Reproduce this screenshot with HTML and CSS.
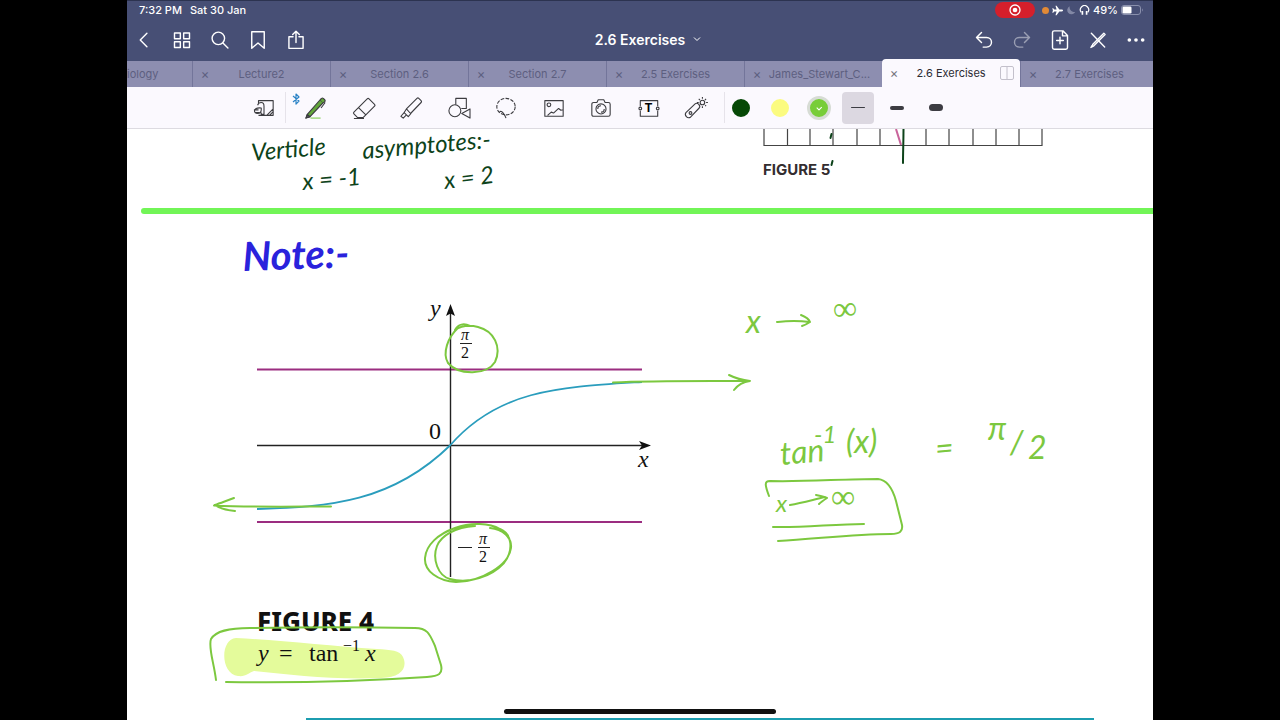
FILE: index.html
```html
<!DOCTYPE html>
<html lang="en">
<head>
  <meta charset="UTF-8" />
  <meta name="viewport" content="width=device-width, initial-scale=1.0" />
  <title>2.6 Exercises</title>
  <link rel="stylesheet" href="styles.css">
</head>
<body>
  <div class="tablet">
    <header class="topbar">
      <div class="status">
        <span>7:32 PM</span>
        <span>Sat 30 Jan</span>
        <div class="status-right">
          <span class="recording">
            <svg width="12" height="12" viewBox="0 0 12 12"><circle cx="6" cy="6" r="5" fill="none" stroke="#fff" stroke-width="1.3"/><circle cx="6" cy="6" r="2.3" fill="#fff"/></svg>
          </span>
          <span class="mic-dot"></span>
          <svg width="11" height="11" viewBox="0 0 12 12"><path d="M12 6c0-.7-.7-1-1.500-1H8L5 .8H3.800L5 5H2.500L1.300 3.500H.3L1 6 .3 8.500h1L2.500 7H5l-1.200 4.200H5L8 7h2.500C11.300 7 12 6.700 12 6z" fill="#fff"/></svg>
          <svg width="10" height="10" viewBox="0 0 12 12"><path d="M4.500 1.500A5 5 0 1 0 11 8.300 5.500 5.500 0 0 1 4.500 1.500z" fill="#8288a5"/></svg>
          <svg width="11" height="11" viewBox="0 0 12 12"><path d="M2.500 8A4.500 4.500 0 1 1 9.500 8" fill="none" stroke="#fff" stroke-width="1.300"/><path d="M3.700 6.500v4M8.300 6.500v4" stroke="#fff" stroke-width="1.800"/></svg>
          <span>49%</span>
          <svg width="23" height="10" viewBox="0 0 23 10"><rect x=".5" y=".5" width="19" height="9" rx="2.500" fill="none" stroke="#8a90ad"/><rect x="1.500" y="1.500" width="9" height="7" rx="1.300" fill="#fff"/><path d="M21.300 3.500c1 .5 1 2.500 0 3" fill="#8a90ad"/></svg>
        </div>
      </div>

      <div class="titlebar">
        <div class="nav">
          <button aria-label="Back"><svg viewBox="0 0 24 24"><path d="M15.500 4 7.500 12l8 8"/></svg></button>
          <button aria-label="Pages"><svg viewBox="0 0 24 24"><path d="M3 3.500h7V10.500H3zM14 3.500h7V10.500h-7zM3 14h7v7H3zM14 14h7v7h-7z"/></svg></button>
          <button aria-label="Search"><svg viewBox="0 0 24 24"><circle cx="10" cy="10" r="7.500"/><path d="m15.500 15.500 6 6"/></svg></button>
          <button aria-label="Bookmark"><svg viewBox="0 0 24 24"><path d="M4.500 2h15v20L12 15.500l-7.500 6.500z"/></svg></button>
          <button aria-label="Share"><svg viewBox="0 0 24 24"><path d="M8.500 8h-5v14h17V8h-5M12 15V1.500M8 5.500l4-4 4 4"/></svg></button>
        </div>
        <button class="doc-title">2.6 Exercises
          <svg class="chevron" viewBox="0 0 8 8"><path d="M1 2.500 4 5.500l3-3"/></svg>
        </button>
        <div class="nav nav-right">
          <button aria-label="Undo"><svg viewBox="0 0 24 24"><path d="M9 3 3 9l6 6M3 9h12c8 0 8 11.500 0 11.500h-4"/></svg></button>
          <button aria-label="Redo" disabled><svg viewBox="0 0 24 24"><path d="m15 3 6 6-6 6M21 9H9C1 9 1 20.500 9 20.500h4"/></svg></button>
          <button aria-label="Add page"><svg viewBox="0 0 24 24"><path d="M3 3q0-2 2-2h10.500L21 6.500V21q0 2-2 2H5q-2 0-2-2zM15 1v6h6M12 8.500v8M8 12.500h8"/></svg></button>
          <button aria-label="Stop editing"><svg viewBox="0 0 24 24"><path d="m4 4 16 16.500"/><path d="M19 4 5.500 17.500M20.500 5.500 7 19M19 4l1.500 1.500M5.500 17.500 3.500 21 7 19"/></svg></button>
          <button aria-label="More"><svg viewBox="0 0 24 24"><g fill="#fff" stroke="none"><circle cx="4" cy="12" r="2.200"/><circle cx="12" cy="12" r="2.200"/><circle cx="20" cy="12" r="2.200"/></g></svg></button>
        </div>
      </div>
    </header>

    <nav class="tabs">
      <div class="tab tab-cut"><a href="#">iology</a></div>
      <div class="tab"><button aria-label="Close">×</button><a href="#">Lecture2</a></div>
      <div class="tab"><button aria-label="Close">×</button><a href="#">Section 2.6</a></div>
      <div class="tab"><button aria-label="Close">×</button><a href="#">Section 2.7</a></div>
      <div class="tab"><button aria-label="Close">×</button><a href="#">2.5 Exercises</a></div>
      <div class="tab tab-long"><button aria-label="Close">×</button><a href="#">James_Stewart_C...</a></div>
      <div class="tab active"><button aria-label="Close">×</button><a href="#">2.6 Exercises</a>
        <svg class="split" viewBox="0 0 14 14"><path d="M.5 2q0-1.500 1.500-1.500h10q1.500 0 1.500 1.500v10q0 1.500-1.500 1.500H2Q.5 13.500.5 12zM7 .5v13"/></svg>
      </div>
      <div class="tab"><button aria-label="Close">×</button><a href="#">2.7 Exercises</a></div>
    </nav>

    <div class="toolbar">
      <button aria-label="Zoom window"><svg viewBox="0 0 24 24"><path d="M6 7V4h16v16H6M22 13l-7 7M18 20l4-4"/><path d="M5 9q1-3 4-3t3 4v9H9v-2M9 12c-9-1-9 6-4 6q4 0 4-4zM1 14h5M2 17h5" /></svg></button>
      <span class="divider"></span>
      <div class="tools">
        <button class="pen" aria-label="Pen">
          <svg viewBox="0 0 24 24"><path d="M6 23h11" stroke="#7fce4d"/><path d="M1 23 2.500 19 16.500 3l3.500 3L5.500 21.500z" fill="#62a63a"/><path d="m16.500 3 1.500-1.500q1-.7 2 0L21.500 3q1 1 0 2L20 6.500M22 6l-4.500 6" fill="#62a63a"/><path d="m1 23 1.500-4 3 2.500z" fill="#555"/></svg>
          <svg class="bluetooth" viewBox="0 0 8 12"><path d="m1 3 6 5-3 3V1l3 3-6 5"/></svg>
        </button>
        <button aria-label="Eraser"><svg viewBox="0 0 24 24"><path d="M1 16.500 15.500 2q1-1 2 0L23.500 8q1 1 0 2L11 22.500H5L1 18.500q-1-1 0-2zM6 11.500l8 8M1 23.500h11"/></svg></button>
        <button aria-label="Highlighter"><svg viewBox="0 0 24 24"><path d="M7 13 18.500 1.500q1-1 2 0L23 4q1 1 0 2L11.500 18zM7 13l-2.500 4 4.500 4.500 3-3.500M4.500 17l-3.500 4 2.500 2 3.500-3.500"/></svg></button>
        <button aria-label="Shapes"><svg viewBox="0 0 24 24"><path d="M8.500 8.500V1.500H20v11h-5.500M24 13v10l-9-5z"/><circle cx="7.500" cy="15" r="6.500"/></svg></button>
        <button aria-label="Lasso"><svg viewBox="0 0 24 24"><ellipse cx="12" cy="10.500" rx="10" ry="9" stroke-dasharray="4 1.500"/><path d="M5 16q2-1 4 1.500t3 5.500"/></svg></button>
        <button aria-label="Image"><svg viewBox="0 0 24 24"><path d="M2 4h20v17H2zM5 20l4-3.500 2.500 1 5.500-5 2.500 2L22 14"/><circle cx="6.500" cy="8.500" r="2"/></svg></button>
        <button aria-label="Camera"><svg viewBox="0 0 24 24"><path d="M4 6h3.500L9 3h6l1.500 3H20q2 0 2 2v11q0 2-2 2H4q-2 0-2-2V8q0-2 2-2z"/><circle cx="12" cy="13" r="5.500"/><path d="M8.500 13q0-3.500 3.500-3.500M15.500 13q0 3.500-3.500 3.500"/></svg></button>
        <button class="text-tool" aria-label="Text"><svg viewBox="0 0 24 24"><path d="M2.500 10V4h19v6M2.500 15v6h19v-6"/><circle cx="2.500" cy="12.500" r="1.500"/><circle cx="21.500" cy="12.500" r="1.500"/></svg><span>T</span></button>
        <button aria-label="Laser pointer"><svg viewBox="0 0 24 24"><path d="m1 17 10-9.500q2-1.500 4 .5t.5 4L6 22q-2.500 1.500-4.500-.5T1 17z"/><circle cx="6" cy="17.500" r="1.500"/><circle cx="19" cy="6" r="2.500"/><path d="M19 0v2M19 10v2M13 6h2M23 6h2M15 2l1.300 1.300M23 2l-1.300 1.300M22 9l1 1"/></svg></button>
      </div>
      <span class="divider"></span>
      <div class="swatches">
        <button class="swatch dark-green" aria-label="Dark green"></button>
        <button class="swatch yellow" aria-label="Yellow"></button>
        <button class="swatch green picked" aria-label="Green"><svg viewBox="0 0 24 24"><path d="m9.500 11.500 2.500 2.500 3-3"/></svg></button>
      </div>
      <div class="widths">
        <button class="picked" aria-label="Thin"><span class="line thin"></span></button>
        <button aria-label="Medium"><span class="line medium"></span></button>
        <button aria-label="Thick"><span class="line thick"></span></button>
      </div>
    </div>

    <main>
      <svg class="page" viewBox="127 129 1026 591">
        <!-- bottom of figure 5 -->
        <path class="grid" d="M764 129v16.500h278V129M787.500 129v16M810 129v16M833 129v16M857 129v16M880 129v16M926 129v16M949 129v16M973 129v16M996 129v16M1019 129v16"/>
        <path d="m896 129 5 16" stroke="#c9649b" stroke-width="2"/>
        <path class="dark-ink" d="M903.500 129c0 12-.5 23-.5 34M831.500 134l-1 4M832.500 161l-1 4"/>
        <text class="caption-small" x="763" y="174.500">FIGURE 5</text>

        <!-- notes above the divider -->
        <g class="dark-note">
          <text x="252" y="161" transform="rotate(-5 252 161)">Verticle</text>
          <text x="363" y="159" transform="rotate(-5 363 159)">asymptotes:-</text>
          <text x="303" y="190" transform="rotate(-5 303 190)">x = -1</text>
          <text x="445" y="189" transform="rotate(-7 445 189)">x = 2</text>
        </g>
        <path d="M144 211h1009" stroke="#72f557" stroke-width="6" stroke-linecap="round"/>
        <text class="blue-note" x="243" y="271" transform="rotate(-2 243 271)">Note:-</text>

        <!-- arctan graph -->
        <path d="M257 369.500h385M257 522h385" stroke="#9b2d80" stroke-width="1.800"/>
        <path d="M257 445.500h385M450.500 312v265" stroke="#222" stroke-width="1.400"/>
        <path d="m651 445.500-12-4.500 3 4.500-3 4.500zM450.500 304l-4.500 12 4.500-2.500 4.500 2.500z" fill="#111"/>
        <path class="curve" d="M257 509C330 507 392 502 450 445.500 499 389 561 387 642 382"/>
        <g class="math">
          <text class="italic" x="430" y="316">y</text>
          <text class="italic" x="638" y="467">x</text>
          <text x="429" y="439">0</text>
          <text class="italic small" x="461" y="340">π</text>
          <text class="small" x="461" y="358">2</text>
          <text class="italic small" x="479" y="544">π</text>
          <text class="small" x="479" y="562">2</text>
        </g>
        <path d="M460 343.500h12M478 547.500h12M458 547.500h14" stroke="#222" stroke-width="1.200"/>

        <!-- caption with highlight -->
        <path d="M236 638c-16 1-16 36 2 38 8 1 10-3 16-5 38 4 80 9 127 7 20 0 27-10 22-21-3-7-12-7-26-8-48-3-99-9-141-11z" fill="#e4fb9b"/>
        <text class="caption" x="257" y="631">FIGURE 4</text>
        <g class="math formula">
          <text class="italic" x="258" y="661">y</text>
          <text x="279" y="661">=</text>
          <text x="309" y="661">tan</text>
          <text class="power" x="343" y="651">−1</text>
          <text class="italic" x="365" y="661">x</text>
        </g>

        <!-- green pen marks -->
        <g class="green-ink">
          <path d="M458 328c-10 9-16 25-10 35 11 13 39 12 47-1 7-15-1-31-17-35-8-2-17-1-23 3 3-6 9-7 15-4"/>
          <path d="M475 526c-20 1-34 10-38 20-5 13 1 30 13 33 19 5 41-2 54-16 10-13 8-29-4-34-10-6-29-7-45-1-17 6-29 17-30 30-1 13 13 23 31 24 25 0 53-17 55-34 1-10-8-19-21-20"/>
          <path d="M613 382.500c40-2 89-1.500 135-1.500M729 375c6 3 12 5 21 6-8 1-13 5-16 9"/>
          <path d="M331 506.500c-36 0-76 1-117-1M234 498c-8 3-14 5-19 7 5 4 11 5 20 6"/>
          <path d="M216 680c-2-17-8-33-5-41 5-8 17-11 39-11 57-1 112-1 165 0 13 0 15 7 20 18l6 19c2 9-2 11-14 12-60 4-139 6-201 5"/>
          <path d="m777 322c9-1 17-2 33 0M801 315c5 2 8 4 9 7-3 2-5 3-8 4"/>
          <path d="M769 496c-4-11-5-15 1-15 34 1 72-2 108-2 10 1 15 11 18 22l6 24c1 6-2 9-11 9-39 0-74 5-113 7M773 527c29 1 61-3 91-3"/>
          <path d="M790 505c12-2 22-5 35-8M816 495c6 1 9 2 11 3-3 2-6 4-8 6"/>
        </g>
        <g class="green-note">
          <text class="large" x="746" y="333">x</text>
          <text class="infinity" x="834" y="321" transform="rotate(-6 834 321)">∞</text>
          <text class="large" x="781" y="465" transform="rotate(-5 781 465)">tan</text>
          <text x="814" y="443">-1</text>
          <text class="large" x="846" y="453">(x)</text>
          <text class="large" x="936" y="460" transform="rotate(-5 936 460)">=</text>
          <text class="large" x="988" y="440">π</text>
          <text class="large" x="1010" y="454">/</text>
          <text class="large" x="1028" y="459">2</text>
          <text x="776" y="512">x</text>
          <text class="infinity" x="831" y="508">∞</text>
        </g>

        <path d="M306 719.500h788" stroke="#1c9db0" stroke-width="3"/>
        <path d="M506.500 711.500h267" stroke="#111" stroke-width="5" stroke-linecap="round"/>
      </svg>
    </main>
  </div>
</body>
</html>
```
FILE: styles.css
```css
* {
  box-sizing: border-box;
}
body {
  font-family: Inter, sans-serif;
  background-color: #000;
  margin: 0;
}
button {
  background: none;
  border: none;
  padding: 0;
  font: inherit;
  color: inherit;
  display: flex;
  align-items: center;
  justify-content: center;
  cursor: pointer;
}
a {
  color: inherit;
  text-decoration: none;
}
svg {
  display: block;
}
.tablet {
  width: 100%;
  max-width: 1026px;
  margin: 0 auto;
  background-color: white;
  overflow: hidden;
}

/* Status and title */
.topbar {
  background-color: #474f75;
  border-top: 1px solid #2c3350;
  color: white;
}
.status {
  display: flex;
  align-items: center;
  gap: 8px;
  height: 18px;
  padding: 0 9px 0 12px;
  font-size: 11px;
  font-weight: 500;
}
.status-right {
  display: flex;
  align-items: center;
  gap: 3px;
  margin-left: auto;
}
.recording {
  display: flex;
  align-items: center;
  justify-content: center;
  width: 40px;
  height: 16px;
  margin-right: 4px;
  border-radius: 8px;
  background-color: #d41f2b;
}
.mic-dot {
  width: 7px;
  height: 7px;
  border-radius: 50%;
  background-color: #e28a36;
}
.titlebar {
  display: grid;
  grid-template-columns: 1fr auto 1fr;
  height: 42px;
}
.nav {
  display: flex;
  gap: 4px;
}
.nav-right {
  justify-content: flex-end;
}
.nav button {
  width: 34px;
}
.nav svg {
  width: 20px;
  height: 20px;
  fill: none;
  stroke: white;
  stroke-width: 1.7;
  stroke-linecap: round;
  stroke-linejoin: round;
}
.nav button:disabled {
  opacity: 0.45;
}
.doc-title {
  gap: 8px;
  padding: 0 0 2px 16px;
  font-size: 14px;
  font-weight: 600;
}
.chevron {
  width: 8px;
  height: 8px;
  fill: none;
  stroke: white;
}

/* Tabs */
.tabs {
  display: flex;
  height: 26px;
  background-color: #8d8eb0;
  color: #5d5f80;
  font-size: 11px;
}
.tab {
  position: relative;
  flex: 0 0 138px;
  display: flex;
  align-items: center;
  justify-content: center;
  border-left: 1px solid #73759a;
}
.tab button {
  position: absolute;
  left: 6px;
  width: 12px;
  height: 26px;
  font-size: 13px;
}
.tab a {
  white-space: nowrap;
}
.tab-cut {
  flex-basis: 65px;
  justify-content: flex-start;
  border-left: none;
}
.tab-long {
  padding-left: 12px;
}
.tab.active {
  height: 28px;
  margin-top: -2px;
  border: none;
  border-radius: 4px 4px 0 0;
  background-color: #fbf9fe;
  color: #2c2c34;
}
.active button {
  color: #77747f;
}
.split {
  position: absolute;
  right: 6px;
  width: 14px;
  height: 14px;
  fill: none;
  stroke: #c3c0cb;
}

/* Toolbar */
.toolbar {
  display: flex;
  align-items: center;
  height: 42px;
  padding-left: 125px;
  background-color: #fbf9fe;
  border-bottom: 1px solid #dddbe1;
}
.toolbar button {
  position: relative;
  flex: none;
  width: 24px;
  height: 24px;
}
.toolbar svg {
  width: 22px;
  height: 22px;
  fill: none;
  stroke: #3c3c40;
  stroke-width: 1.2;
  stroke-linejoin: round;
  overflow: visible;
}
.divider {
  width: 1px;
  height: 31px;
  margin: 0 18px 0 9px;
  background-color: #e6e3ea;
}
.tools {
  flex: 0 0 404px;
  display: flex;
  justify-content: space-between;
}
.tools + .divider {
  margin: 0 4px 0 16px;
}
.toolbar .bluetooth {
  position: absolute;
  left: -12px;
  top: -3px;
  width: 8px;
  height: 12px;
  stroke: #2b83c6;
}
.text-tool span {
  position: absolute;
  font-size: 12px;
  font-weight: 700;
}
.swatches {
  display: flex;
  gap: 15px;
}
.toolbar .swatch {
  border: 3px solid #fbf9fe;
  border-radius: 50%;
}
.dark-green {
  background-color: #064806;
}
.yellow {
  background-color: #fbfb80;
}
.green {
  background-color: #78cd38;
}
.toolbar .swatch.picked {
  border-color: #d7dcd5;
}
.toolbar .swatch svg {
  stroke: white;
}
.widths {
  display: flex;
  gap: 7px;
  margin-left: 11px;
}
.toolbar .widths button {
  width: 32px;
  height: 32px;
  border-radius: 4px;
}
.widths .picked {
  background-color: #dcd8e1;
}
.line {
  width: 14px;
  border-radius: 4px;
  background-color: #3c3c42;
}
.thin {
  height: 1px;
}
.medium {
  height: 4px;
}
.thick {
  height: 7px;
}

/* Notebook page */
.page {
  width: 100%;
  height: auto;
}
.grid {
  fill: none;
  stroke: #444;
  stroke-width: 1.2;
}
.dark-ink {
  fill: none;
  stroke: #0d431a;
  stroke-width: 2;
  stroke-linecap: round;
}
.caption-small {
  font: 700 15px Inter, sans-serif;
  fill: #332d30;
}
.caption {
  font: 800 26px "Noto Sans", sans-serif;
  fill: #111;
}
.dark-note {
  font: italic 24px Lato, sans-serif;
  fill: #0d431a;
}
.blue-note {
  font: italic 700 40px Lato, sans-serif;
  fill: #2a22dc;
}
.green-note {
  font: italic 24px Lato, "DejaVu Sans", sans-serif;
  fill: #7cc83f;
}
.green-note .large {
  font-size: 32px;
}
.green-note .infinity {
  font: 34px "Liberation Serif", serif;
}
.green-ink {
  fill: none;
  stroke: #7cc83f;
  stroke-width: 2;
  stroke-linecap: round;
  stroke-linejoin: round;
}
.curve {
  fill: none;
  stroke: #2a9dbd;
  stroke-width: 1.8;
}
.math {
  font: 24px "Liberation Serif", serif;
  fill: #111;
}
.italic {
  font-style: italic;
}
.math .small {
  font-size: 16px;
}
.math .power {
  font-size: 16px;
}
```
